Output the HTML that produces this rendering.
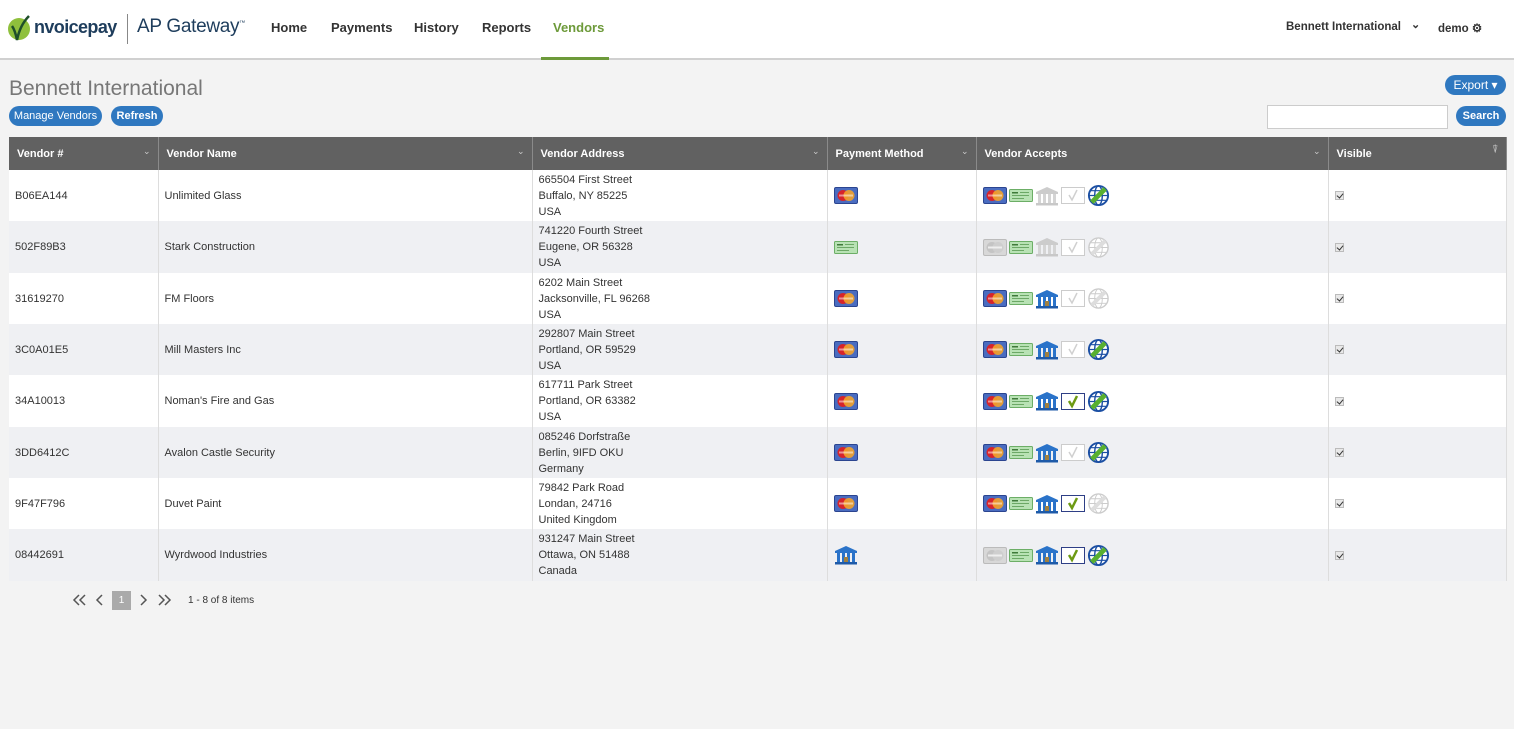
<!DOCTYPE html>
<html><head><meta charset="utf-8"><style>
*{box-sizing:border-box;margin:0;padding:0}
body{width:1514px;height:729px;background:#f3f3f3;font-family:"Liberation Sans",Arial,sans-serif;position:relative;overflow:hidden;color:#333}
.top{position:absolute;left:0;top:0;width:1514px;height:60px;background:#fff;border-bottom:2px solid #d0d0d0}
.nav{position:absolute;top:20px;font-size:13px;font-weight:bold;color:#333}
.btn{position:absolute;background:#2f78c0;color:#fff;border-radius:11px;font-size:11px;text-align:center;line-height:20px;height:20px}
table{position:absolute;left:9px;top:137px;width:1497px;border-collapse:collapse;table-layout:fixed}
th{background:#616161;color:#fff;font-size:11px;text-align:left;height:33px;padding-left:8px;border-right:1px solid #8a8a8a;position:relative;font-weight:bold}
th .c{position:absolute;right:7px;top:9px;font-size:9px;color:#ccc;font-weight:normal}
td{font-size:11px;color:#333;padding-left:6px;border-right:1px solid #ddd;vertical-align:middle;line-height:16px}
tr.a td{background:#fff}tr.b td{background:#eff0f3}
td svg{vertical-align:middle;margin-right:2px}
.cb{display:inline-block;width:9px;height:9px;border:1px solid #bbb;background:#e8e8e8;position:relative;vertical-align:middle}
.cb:after{content:"";position:absolute;left:2px;top:0px;width:3px;height:5px;border:solid #333;border-width:0 1.5px 1.5px 0;transform:rotate(40deg)}
.pg{position:absolute;top:592px}
</style></head><body>
<svg width="0" height="0" style="position:absolute">
<defs>
<symbol id="card" viewBox="0 0 24 17"><rect x=".5" y=".5" width="23" height="16" rx="1.5" fill="#4a6cc0" stroke="#2b4590"/><circle cx="9" cy="8.5" r="5.5" fill="#d6242c"/><circle cx="15" cy="8.5" r="5.5" fill="#f3a32b" opacity=".9"/><rect x="5" y="7.5" width="14" height="2" fill="#fff" opacity=".5"/></symbol>
<symbol id="cardg" viewBox="0 0 24 17"><rect x=".5" y=".5" width="23" height="16" rx="1.5" fill="#d8d8d8" stroke="#bbb"/><circle cx="9" cy="8.5" r="5.5" fill="#c4c4c4"/><circle cx="15" cy="8.5" r="5.5" fill="#cecece"/><rect x="5" y="7.5" width="14" height="2" fill="#eee"/></symbol>
<symbol id="chk" viewBox="0 0 24 13"><rect x=".5" y=".5" width="23" height="12" rx="1" fill="#b8e2b4" stroke="#6cae66"/><rect x="3" y="3" width="6" height="1.5" fill="#3f7a3a"/><rect x="11" y="3" width="9" height="1" fill="#6ca866"/><rect x="3" y="6" width="17" height="1" fill="#6ca866"/><rect x="3" y="9" width="12" height="1" fill="#6ca866"/></symbol>
<symbol id="bank" viewBox="0 0 24 20"><path d="M1 6 L12 1 L23 6Z" fill="#2a73c9"/><rect x="1" y="6" width="22" height="2" fill="#2a73c9"/><rect x="3" y="8" width="3" height="9" fill="#2a73c9"/><rect x="8" y="8" width="3" height="9" fill="#2a73c9"/><rect x="13" y="8" width="3" height="9" fill="#2a73c9"/><rect x="18" y="8" width="3" height="9" fill="#2a73c9"/><rect x="10" y="12" width="4" height="5" fill="#a08040"/><rect x="1" y="17" width="22" height="2.5" fill="#1e5aa8"/></symbol>
<symbol id="bankg" viewBox="0 0 24 20"><path d="M1 6 L12 1 L23 6Z" fill="#ccc"/><rect x="1" y="6" width="22" height="2" fill="#ccc"/><rect x="3" y="8" width="3" height="9" fill="#d4d4d4"/><rect x="8" y="8" width="3" height="9" fill="#d4d4d4"/><rect x="13" y="8" width="3" height="9" fill="#d4d4d4"/><rect x="18" y="8" width="3" height="9" fill="#d4d4d4"/><rect x="1" y="17" width="22" height="2.5" fill="#c8c8c8"/></symbol>
<symbol id="tick" viewBox="0 0 24 17"><rect x=".5" y=".5" width="23" height="16" fill="#fff" stroke="#2e3f86"/><path d="M8 8 L11 13 L16 3" stroke="#6d9a14" stroke-width="2.5" fill="none"/></symbol>
<symbol id="tickg" viewBox="0 0 24 17"><rect x=".5" y=".5" width="23" height="16" fill="#fff" stroke="#ccc"/><path d="M8 8 L11 13 L16 3" stroke="#d0d0d0" stroke-width="1.5" fill="none"/></symbol>
<symbol id="glob" viewBox="0 0 24 24"><circle cx="12" cy="12" r="10" fill="#fff" stroke="#1b4fa3" stroke-width="2"/><ellipse cx="12" cy="12" rx="4" ry="10" fill="none" stroke="#1b4fa3" stroke-width="1.5"/><path d="M2 12H22M4 7H20M4 17H20" stroke="#1b4fa3" stroke-width="1.2"/><path d="M5 19 L19 5" stroke="#58b030" stroke-width="5"/></symbol>
<symbol id="globg" viewBox="0 0 24 24"><circle cx="12" cy="12" r="10" fill="#fff" stroke="#ccc" stroke-width="1.5"/><ellipse cx="12" cy="12" rx="4" ry="10" fill="none" stroke="#ccc"/><path d="M2 12H22M4 7H20M4 17H20" stroke="#ccc"/><path d="M5 19 L19 5" stroke="#ddd" stroke-width="4"/></symbol>
</defs></svg>

<div class="top">
  <svg style="position:absolute;left:7px;top:13px" width="26" height="30" viewBox="0 0 26 30"><circle cx="12" cy="16" r="11" fill="#8fc03c"/><path d="M5 13 Q8 17 10 27 Q13 12 22 3" stroke="#1f4f2a" stroke-width="2.5" fill="none"/></svg>
  <div style="position:absolute;left:34px;top:17px;font-size:18px;font-weight:bold;color:#1e3d5c;letter-spacing:-.6px">nvoicepay</div>
  <div style="position:absolute;left:127px;top:14px;width:1px;height:30px;background:#888"></div>
  <div style="position:absolute;left:137px;top:16px;font-size:19px;color:#1e3d5c;letter-spacing:-.3px">AP Gateway<sup style="font-size:6px">™</sup></div>
  <div class="nav" style="left:271px">Home</div>
  <div class="nav" style="left:331px">Payments</div>
  <div class="nav" style="left:414px">History</div>
  <div class="nav" style="left:482px">Reports</div>
  <div class="nav" style="left:553px;color:#6d9a3a">Vendors</div>
  <div style="position:absolute;left:541px;top:57px;width:68px;height:3px;background:#6d9a3a"></div>
  <div class="nav" style="left:1286px;top:21px;font-size:11.5px">Bennett International</div>
  <div class="nav" style="left:1411px;top:18px;font-size:11px">&#8964;</div>
  <div class="nav" style="left:1438px;top:21px;font-size:11.5px">demo ⚙</div>
</div>

<div style="position:absolute;left:9px;top:77px;font-size:21px;color:#777">Bennett International</div>
<div class="btn" style="left:9px;top:106px;width:93px">Manage Vendors</div>
<div class="btn" style="left:111px;top:106px;width:52px;font-weight:bold">Refresh</div>
<div class="btn" style="left:1445px;top:75px;width:61px;font-size:12px">Export ▾</div>
<div style="position:absolute;left:1267px;top:105px;width:181px;height:24px;background:#fff;border:1px solid #ccc"></div>
<div class="btn" style="left:1456px;top:106px;width:50px;font-weight:bold">Search</div>

<table>
<colgroup><col style="width:149px"><col style="width:374px"><col style="width:295px"><col style="width:149px"><col style="width:352px"><col style="width:178px"></colgroup>
<tr><th>Vendor #<span class="c">&#8964;</span></th><th>Vendor Name<span class="c">&#8964;</span></th><th>Vendor Address<span class="c">&#8964;</span></th><th>Payment Method<span class="c">&#8964;</span></th><th>Vendor Accepts<span class="c">&#8964;</span></th><th>Visible<span class="c" style="font-size:11px;top:7px">⍒</span></th></tr>
<tr class="a" style="height:51px"><td>B06EA144</td><td>Unlimited Glass</td><td>665504 First Street<br>Buffalo, NY 85225<br>USA</td><td><svg width="24" height="17"><use href="#card"/></svg></td><td><svg width="24" height="17"><use href="#card"/></svg><svg width="24" height="13"><use href="#chk"/></svg><svg width="24" height="20"><use href="#bankg"/></svg><svg width="24" height="17"><use href="#tickg"/></svg><svg width="23" height="23"><use href="#glob"/></svg></td><td><span class="cb"></span></td></tr>
<tr class="b" style="height:52px"><td>502F89B3</td><td>Stark Construction</td><td>741220 Fourth Street<br>Eugene, OR 56328<br>USA</td><td><svg width="24" height="13"><use href="#chk"/></svg></td><td><svg width="24" height="17"><use href="#cardg"/></svg><svg width="24" height="13"><use href="#chk"/></svg><svg width="24" height="20"><use href="#bankg"/></svg><svg width="24" height="17"><use href="#tickg"/></svg><svg width="23" height="23"><use href="#globg"/></svg></td><td><span class="cb"></span></td></tr>
<tr class="a" style="height:51px"><td>31619270</td><td>FM Floors</td><td>6202 Main Street<br>Jacksonville, FL 96268<br>USA</td><td><svg width="24" height="17"><use href="#card"/></svg></td><td><svg width="24" height="17"><use href="#card"/></svg><svg width="24" height="13"><use href="#chk"/></svg><svg width="24" height="20"><use href="#bank"/></svg><svg width="24" height="17"><use href="#tickg"/></svg><svg width="23" height="23"><use href="#globg"/></svg></td><td><span class="cb"></span></td></tr>
<tr class="b" style="height:51px"><td>3C0A01E5</td><td>Mill Masters Inc</td><td>292807 Main Street<br>Portland, OR 59529<br>USA</td><td><svg width="24" height="17"><use href="#card"/></svg></td><td><svg width="24" height="17"><use href="#card"/></svg><svg width="24" height="13"><use href="#chk"/></svg><svg width="24" height="20"><use href="#bank"/></svg><svg width="24" height="17"><use href="#tickg"/></svg><svg width="23" height="23"><use href="#glob"/></svg></td><td><span class="cb"></span></td></tr>
<tr class="a" style="height:52px"><td>34A10013</td><td>Noman's Fire and Gas</td><td>617711 Park Street<br>Portland, OR 63382<br>USA</td><td><svg width="24" height="17"><use href="#card"/></svg></td><td><svg width="24" height="17"><use href="#card"/></svg><svg width="24" height="13"><use href="#chk"/></svg><svg width="24" height="20"><use href="#bank"/></svg><svg width="24" height="17"><use href="#tick"/></svg><svg width="23" height="23"><use href="#glob"/></svg></td><td><span class="cb"></span></td></tr>
<tr class="b" style="height:51px"><td>3DD6412C</td><td>Avalon Castle Security</td><td>085246 Dorfstraße<br>Berlin, 9IFD OKU<br>Germany</td><td><svg width="24" height="17"><use href="#card"/></svg></td><td><svg width="24" height="17"><use href="#card"/></svg><svg width="24" height="13"><use href="#chk"/></svg><svg width="24" height="20"><use href="#bank"/></svg><svg width="24" height="17"><use href="#tickg"/></svg><svg width="23" height="23"><use href="#glob"/></svg></td><td><span class="cb"></span></td></tr>
<tr class="a" style="height:51px"><td>9F47F796</td><td>Duvet Paint</td><td>79842 Park Road<br>Londan, 24716<br>United Kingdom</td><td><svg width="24" height="17"><use href="#card"/></svg></td><td><svg width="24" height="17"><use href="#card"/></svg><svg width="24" height="13"><use href="#chk"/></svg><svg width="24" height="20"><use href="#bank"/></svg><svg width="24" height="17"><use href="#tick"/></svg><svg width="23" height="23"><use href="#globg"/></svg></td><td><span class="cb"></span></td></tr>
<tr class="b" style="height:52px"><td>08442691</td><td>Wyrdwood Industries</td><td>931247 Main Street<br>Ottawa, ON 51488<br>Canada</td><td><svg width="24" height="20"><use href="#bank"/></svg></td><td><svg width="24" height="17"><use href="#cardg"/></svg><svg width="24" height="13"><use href="#chk"/></svg><svg width="24" height="20"><use href="#bank"/></svg><svg width="24" height="17"><use href="#tick"/></svg><svg width="23" height="23"><use href="#glob"/></svg></td><td><span class="cb"></span></td></tr>
</table>

<svg class="pg" style="left:72px" width="16" height="16" viewBox="0 0 16 16"><path d="M7 3 L2 8 L7 13 M13 3 L8 8 L13 13" stroke="#555" stroke-width="1.5" fill="none"/></svg>
<svg class="pg" style="left:95px" width="10" height="16" viewBox="0 0 10 16"><path d="M7 3 L2 8 L7 13" stroke="#555" stroke-width="1.5" fill="none"/></svg>
<div style="position:absolute;left:112px;top:591px;width:19px;height:19px;background:#aaa;color:#fff;font-size:10px;text-align:center;line-height:19px">1</div>
<svg class="pg" style="left:138px" width="10" height="16" viewBox="0 0 10 16"><path d="M3 3 L8 8 L3 13" stroke="#555" stroke-width="1.5" fill="none"/></svg>
<svg class="pg" style="left:156px" width="16" height="16" viewBox="0 0 16 16"><path d="M3 3 L8 8 L3 13 M9 3 L14 8 L9 13" stroke="#555" stroke-width="1.5" fill="none"/></svg>
<div style="position:absolute;left:188px;top:595px;font-size:10px;color:#333">1 - 8 of 8 items</div>
</body></html>
